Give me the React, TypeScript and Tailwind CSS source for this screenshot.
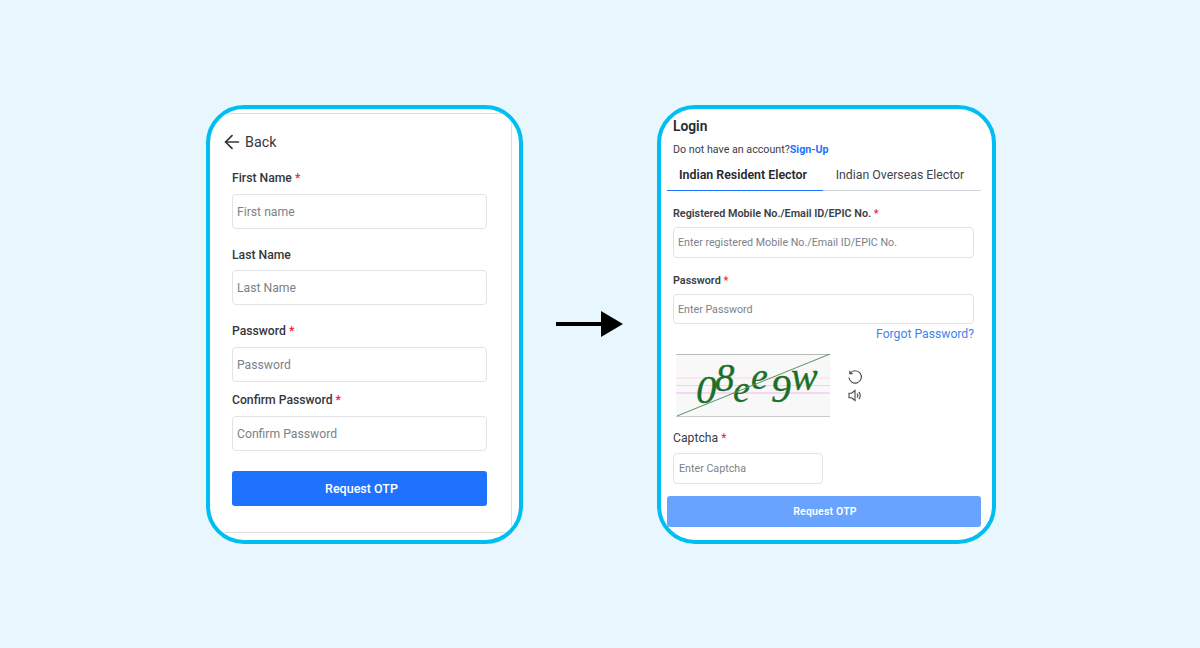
import React from 'react';
import { ArrowLeft } from 'lucide-react';

function Req() {
  return <span className="text-[#f5222d]"> *</span>;
}

function SignupInput({ placeholder, className }: { placeholder: string; className: string }) {
  return (
    <input
      readOnly
      placeholder={placeholder}
      className={`block w-[255px] h-[35px] px-[4px] bg-white border border-[#e1e3e6] rounded-[4px] text-[12.2px] outline-none placeholder:text-[#7c8289] ${className}`}
    />
  );
}

function LoginInput({ placeholder, className }: { placeholder: string; className: string }) {
  return (
    <input
      readOnly
      placeholder={placeholder}
      className={`block px-[4px] bg-white border border-[#dfe1e5] rounded-[4px] text-[10.7px] outline-none placeholder:text-[#7c8289] ${className}`}
    />
  );
}

function Captcha() {
  return (
    <svg width="154" height="63" viewBox="0 0 154 63" className="block ml-[3px] mt-[13px]">
      <rect x="0" y="0" width="154" height="63" fill="#f7f8f7" />
      <rect x="0" y="0" width="154" height="1" fill="#b9bcb9" />
      <rect x="0" y="62" width="154" height="1" fill="#c9cbc9" />
      <line x1="0" y1="24" x2="154" y2="24" stroke="#fbdcd8" strokeWidth="1" />
      <line x1="0" y1="31.5" x2="154" y2="31.5" stroke="#bfe9f7" strokeWidth="1" />
      <line x1="0" y1="39" x2="154" y2="39" stroke="#f5b4ee" strokeWidth="1" />
      <g fill="#1a6f2a" stroke="#1a6f2a" strokeWidth="0.3" fontFamily="'Liberation Serif', serif" fontStyle="italic">
        <text x="20" y="49" fontSize="41">0</text>
        <text x="39" y="37" fontSize="39">8</text>
        <text x="57" y="48" fontSize="38">e</text>
        <text x="75" y="35" fontSize="38">e</text>
        <text x="95" y="48" fontSize="40">9</text>
        <text x="115" y="36" fontSize="40">w</text>
      </g>
      <line x1="1" y1="62" x2="154" y2="0" stroke="#5e8f62" strokeWidth="1" />
    </svg>
  );
}

export default function App() {
  return (
    <div className="w-[1200px] h-[648px] overflow-hidden bg-[#e7f7fd] flex items-start pl-[206px] pt-[105px] font-['Roboto',sans-serif]">
      {/* sign up card */}
      <div className="w-[317px] h-[439px] shrink-0 bg-white border-4 border-[#00bdf2] rounded-[38px] overflow-hidden">
        <div className="h-[420px] mt-[4px] mr-[7px] border-t border-r border-b border-[#dedede]">
          <div className="flex items-center h-[20px] mt-[18px] ml-[11px] text-[#33373d]">
            <ArrowLeft size={22} strokeWidth={1.9} />
            <span className="ml-[2px] text-[14.3px] leading-[20px]">Back</span>
          </div>
          <div className="pl-[22px]">
            <div className="mt-[18px] h-[16px] text-[12.2px] leading-[16px] font-medium text-[#33373d]">First Name<Req /></div>
            <SignupInput placeholder="First name" className="mt-[8px]" />
            <div className="mt-[18px] h-[16px] text-[12.2px] leading-[16px] font-medium text-[#33373d]">Last Name</div>
            <SignupInput placeholder="Last Name" className="mt-[7px]" />
            <div className="mt-[18px] h-[16px] text-[12.2px] leading-[16px] font-medium text-[#33373d]">Password<Req /></div>
            <SignupInput placeholder="Password" className="mt-[8px]" />
            <div className="mt-[10px] h-[16px] text-[12.2px] leading-[16px] font-medium text-[#33373d]">Confirm Password<Req /></div>
            <SignupInput placeholder="Confirm Password" className="mt-[8px]" />
            <button className="block w-[255px] h-[35px] mt-[20px] pl-[4px] pt-[1px] bg-[#1f72fe] rounded-[3px] text-white text-[12.5px] font-medium">
              Request OTP
            </button>
          </div>
        </div>
      </div>

      {/* arrow between the two */}
      <svg width="67" height="26" viewBox="0 0 67 26" className="shrink-0 ml-[33px] mt-[206px]">
        <rect x="0" y="11" width="46" height="4" fill="#000000" />
        <polygon points="45,0 67,13 45,26" fill="#000000" />
      </svg>

      {/* login card */}
      <div className="w-[339px] h-[439px] shrink-0 ml-[34px] bg-white border-4 border-[#00bdf2] rounded-[38px] overflow-hidden">
        <div className="pl-[12px] pt-[8px] text-[13.8px] leading-[18px] font-semibold text-[#26292e]">Login</div>
        <div className="pl-[12px] mt-[8px] text-[10.7px] leading-[14px] text-[#3a3e44]">
          Do not have an account?<span className="font-bold text-[#1f72fe]">Sign-Up</span>
        </div>
        <div className="flex ml-[6px] mt-[3px] w-[314px] h-[31px] border-b border-[#ced4da]">
          <div className="w-[156px] h-[31px] pt-[7px] pr-[4px] text-center text-[12.4px] leading-[16px] font-semibold text-[#26292e] border-b border-[#1f72fe]">
            Indian Resident Elector
          </div>
          <div className="flex-1 pt-[7px] pr-[4px] text-center text-[12.3px] leading-[16px] text-[#3f4349]">
            Indian Overseas Elector
          </div>
        </div>
        <div className="pl-[12px]">
          <div className="mt-[16px] text-[10.8px] leading-[14px] font-semibold text-[#3a3e44]">
            Registered Mobile No./Email ID/EPIC No.<Req />
          </div>
          <LoginInput placeholder="Enter registered Mobile No./Email ID/EPIC No." className="w-[301px] h-[31px] mt-[6px]" />
          <div className="mt-[16px] text-[10.8px] leading-[14px] font-semibold text-[#3a3e44]">Password<Req /></div>
          <LoginInput placeholder="Enter Password" className="w-[301px] h-[30px] mt-[6px]" />
          <div className="w-[301px] mt-[2px] text-right text-[12.2px] leading-[16px] text-[#3d85f0]">Forgot Password?</div>
          <div className="flex items-start mt-[-1px]">
            <Captcha />
            <div className="ml-[17px] mt-[28px] flex flex-col items-center text-[#45494f]">
              <svg width="16" height="16" viewBox="0 0 16 16" fill="none" stroke="currentColor" strokeWidth="1.1">
                <path d="M3.2 4.2A6.2 6.2 0 1 1 2 8.5" />
                <path d="M2.8 1.8v2.8h2.8" />
              </svg>
              <svg width="14" height="13" viewBox="0 0 14 13" fill="none" stroke="currentColor" strokeWidth="1.1" className="mt-[4px]">
                <path d="M1 4.2h2.6L7 1.5v10L3.6 8.8H1z" />
                <path d="M9 4.5a3 3 0 0 1 0 4" />
                <path d="M10.8 3a5 5 0 0 1 0 7" />
              </svg>
            </div>
          </div>
          <div className="mt-[13px] text-[12.2px] leading-[16px] text-[#3a3e44]">Captcha<Req /></div>
          <LoginInput placeholder="Enter Captcha" className="w-[150px] h-[31px] mt-[7px] pl-[5px]" />
        </div>
        <button className="block ml-[6px] mt-[12px] w-[314px] h-[31px] pl-[2px] bg-[#68a4ff] rounded-[3px] text-white text-[10.5px] font-semibold tracking-[0.2px]">
          Request OTP
        </button>
      </div>
    </div>
  );
}
